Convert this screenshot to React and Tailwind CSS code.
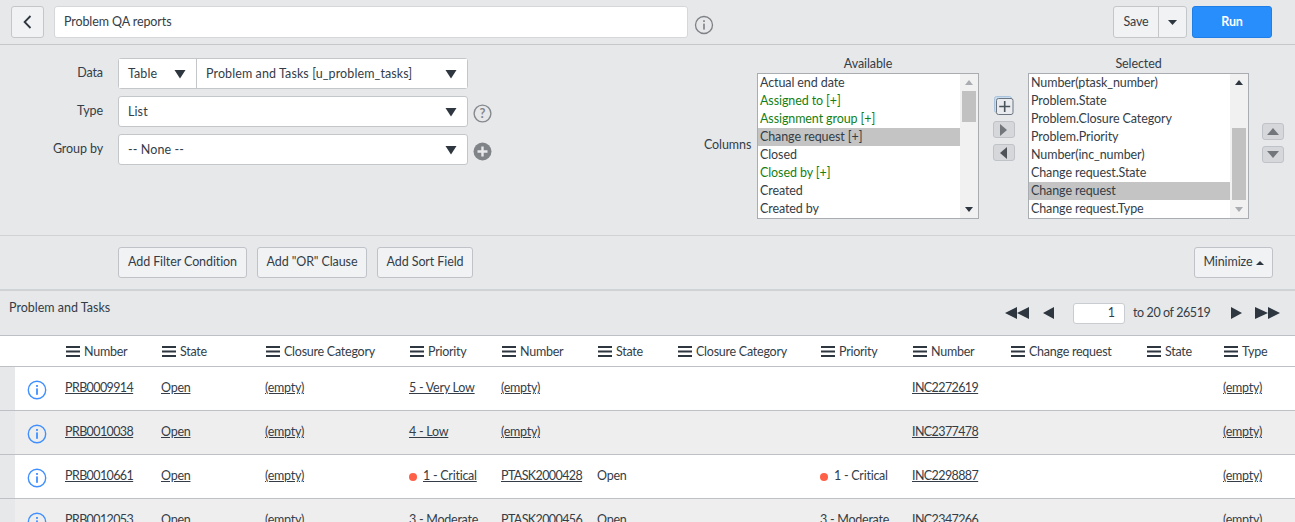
import React from "react";

const cols = "grid grid-cols-[15px_50px_96px_104px_144px_92px_96px_80px_143px_92px_98px_136px_77px_72px]";

const headers = ["Number", "State", "Closure Category", "Priority", "Number", "State", "Closure Category", "Priority", "Number", "Change request", "State", "Type"];

const rows = [
  ["#PRB0009914", "Open", "(empty)", "5 - Very Low", "(empty)", "", "", "", "#INC2272619", "", "", "(empty)"],
  ["#PRB0010038", "Open", "(empty)", "4 - Low", "(empty)", "", "", "", "#INC2377478", "", "", "(empty)"],
  ["#PRB0010661", "Open", "(empty)", "!1 - Critical", "#PTASK2000428", "=Open", "", "~1 - Critical", "#INC2298887", "", "", "(empty)"],
  ["#PRB0012053", "Open", "(empty)", "3 - Moderate", "#PTASK2000456", "=Open", "", "=3 - Moderate", "#INC2347266", "", "", "(empty)"],
];

const available = [
  ["Actual end date"],
  ["Assigned to [+]", "green"],
  ["Assignment group [+]", "green"],
  ["Change request [+]", "sel"],
  ["Closed"],
  ["Closed by [+]", "green"],
  ["Created"],
  ["Created by"],
];

const selected = [
  ["Number(ptask_number)"],
  ["Problem.State"],
  ["Problem.Closure Category"],
  ["Problem.Priority"],
  ["Number(inc_number)"],
  ["Change request.State"],
  ["Change request", "sel"],
  ["Change request.Type"],
];

const Caret = ({ className = "" }) => (
  <svg width="12" height="10" viewBox="0 0 12 10" className={className}>
    <path d="M0.5 1h11L6 9.5z" fill="#2e3640" />
  </svg>
);

const Tri = ({ dir, color = "#2e3640", w = 11, h = 12 }) => (
  <svg width={w} height={h} viewBox="0 0 10 10" preserveAspectRatio="none" className="block">
    <path d={dir === "left" ? "M10 0v10L0 5z" : "M0 0v10l10-5z"} fill={color} />
  </svg>
);

const Lines = () => (
  <svg width="14" height="11" viewBox="0 0 14 11" className="shrink-0">
    <path d="M0 0h14v2H0zM0 4.5h14v2H0zM0 9h14v2H0z" fill="#2e3640" />
  </svg>
);

const InfoIcon = () => (
  <svg width="20" height="20" viewBox="0 0 20 20" className="mt-[3px]">
    <circle cx="10" cy="10" r="8.7" fill="none" stroke="#3f8fff" strokeWidth="1.4" />
    <rect x="9.1" y="8.4" width="1.8" height="6.4" fill="#3f8fff" />
    <rect x="9.1" y="5" width="1.8" height="1.9" fill="#3f8fff" />
  </svg>
);

const Select = ({ children, className = "" }) => (
  <div className={`flex items-center justify-between h-[31px] pl-[9px] pr-[10px] bg-white ${className}`}>
    <span className="pt-[2px] tracking-[0.1px]">{children}</span>
    <Caret />
  </div>
);

const Button = ({ children, className = "" }) => (
  <button className={`h-[31px] bg-[#f1f2f4] border border-[#bfc3c7] rounded-[3px] text-[#343d47] ${className}`}>
    {children}
  </button>
);

const SmallButton = ({ children }) => (
  <div className="flex items-center justify-center w-[22px] h-[17px] bg-[#d5d7da] border border-[#bfc3c7] rounded-[3px]">
    {children}
  </div>
);

const ListBox = ({ items, thumbTop, thumbHeight, upColor, downColor }) => (
  <div className="flex h-[146px] bg-white border border-[#a9adb1]">
    <div className="flex-1 min-w-0">
      {items.map(([text, kind]) => (
        <div
          key={text}
          className={`h-[18px] pl-[2px] leading-[17px] ${kind === "sel" ? "bg-[#c4c4c4]" : ""} ${kind === "green" ? "text-[#157f15]" : ""}`}
        >
          {text}
        </div>
      ))}
    </div>
    <div className="flex flex-col w-[18px] bg-[#f1f1f1]">
      <div className="flex items-center justify-center h-[17px] shrink-0">
        <svg width="8" height="5" viewBox="0 0 8 5"><path d="M0 5h8L4 0z" fill={upColor} /></svg>
      </div>
      <div className="flex-1 px-[2px]">
        <div className={`w-full bg-[#c1c1c1] ${thumbTop} ${thumbHeight}`} />
      </div>
      <div className="flex items-center justify-center h-[17px] shrink-0">
        <svg width="8" height="5" viewBox="0 0 8 5"><path d="M0 0h8L4 5z" fill={downColor} /></svg>
      </div>
    </div>
  </div>
);

const Dot = () => <span className="w-[8px] h-[8px] rounded-full bg-[#ff6048]" />;

const Cell = ({ value }) => {
  if (!value) return <div />;
  const first = value[0];
  const cell = "flex items-center tracking-[-0.25px]";
  if (first === "=") return <div className={cell}>{value.slice(1)}</div>;
  if (first === "~")
    return (
      <div className={`${cell} gap-[6px]`}>
        <Dot />
        {value.slice(1)}
      </div>
    );
  if (first === "!")
    return (
      <div className={`${cell} gap-[6px]`}>
        <Dot />
        <span className="underline">{value.slice(1)}</span>
      </div>
    );
  if (first === "#")
    return (
      <div className={cell}>
        <span className="underline tracking-[-0.6px]">{value.slice(1)}</span>
      </div>
    );
  return (
    <div className={cell}>
      <span className="underline">{value}</span>
    </div>
  );
};

export default function App() {
  return (
    <div className="h-[522px] overflow-hidden bg-[#e6e8ea] text-[#343d47] text-[12.5px] tracking-[-0.1px] font-['Lato','Noto_Sans',sans-serif]">
      {/* top bar */}
      <div className="flex items-center h-[45px] pl-[11px] pr-[23px] border-b border-[#c5c8cb]">
        <button className="flex items-center justify-center w-[33px] h-[32px] bg-[#f1f2f4] border border-[#c4c7ca] rounded-[3px]">
          <svg width="9" height="14" viewBox="0 0 9 14">
            <path d="M7.5 1L1.6 7l5.9 6" fill="none" stroke="#2e3640" strokeWidth="1.8" />
          </svg>
        </button>
        <div className="flex items-center w-[634px] h-[32px] ml-[10px] pl-[9px] bg-white border border-[#d5d7da] rounded-[3px]">
          Problem QA reports
        </div>
        <svg width="20" height="20" viewBox="0 0 20 20" className="ml-[6px] mt-[6px]">
          <circle cx="10" cy="10" r="8.5" fill="none" stroke="#7d8185" strokeWidth="1.3" />
          <rect x="9.2" y="8.6" width="1.6" height="6" fill="#7d8185" />
          <rect x="9.2" y="5.2" width="1.6" height="1.8" fill="#7d8185" />
        </svg>
        <div className="flex w-[74px] h-[32px] ml-auto bg-[#f1f2f4] border border-[#c4c7ca] rounded-[3px]">
          <div className="flex items-center justify-center w-[45px] border-r border-[#c4c7ca]">Save</div>
          <div className="flex items-center justify-center flex-1">
            <svg width="9" height="5" viewBox="0 0 9 5"><path d="M0 0h9L4.5 5z" fill="#2e3640" /></svg>
          </div>
        </div>
        <button className="w-[80px] h-[32px] ml-[5px] bg-[#278efc] border border-[#1f7fe6] rounded-[3px] text-white font-bold">
          Run
        </button>
      </div>

      {/* report settings */}
      <div className="flex h-[191px] border-b border-[#d0d3d6]">
        <div className="flex flex-col gap-[7px] w-[690px] pt-[13px]">
          <div className="flex items-center">
            <span className="w-[103px] text-right mr-[15px]">Data</span>
            <div className="flex w-[350px] h-[31px] bg-white border border-[#c4c7ca] rounded-[3px]">
              <Select className="w-[78px] border-r border-[#c4c7ca] h-full">Table</Select>
              <Select className="flex-1 h-full">Problem and Tasks [u_problem_tasks]</Select>
            </div>
          </div>
          <div className="flex items-center">
            <span className="w-[103px] text-right mr-[15px]">Type</span>
            <Select className="w-[350px] border border-[#c4c7ca] rounded-[3px]">List</Select>
            <svg width="19" height="19" viewBox="0 0 19 19" className="ml-[5px] mt-[4px]">
              <circle cx="9.5" cy="9.5" r="8.4" fill="none" stroke="#85898d" strokeWidth="1.4" />
              <text x="9.5" y="14" textAnchor="middle" fontSize="13" fontWeight="700" fill="#85898d">?</text>
            </svg>
          </div>
          <div className="flex items-center">
            <span className="w-[103px] text-right mr-[15px]">Group by</span>
            <Select className="w-[350px] border border-[#c4c7ca] rounded-[3px]">-- None --</Select>
            <svg width="19" height="19" viewBox="0 0 19 19" className="ml-[5px] mt-[4px]">
              <circle cx="9.5" cy="9.5" r="9" fill="#808488" />
              <path d="M8.3 4.5h2.4v3.8h3.8v2.4h-3.8v3.8H8.3v-3.8H4.5V8.3h3.8z" fill="#e6e8ea" />
            </svg>
          </div>
        </div>

        <div className="flex items-start pt-[10px]">
          <div className="w-[63px] pt-[81px] pl-[14px]">Columns</div>
          <div className="w-[222px] ml-[4px]">
            <div className="text-center h-[18px] leading-[17px]">Available</div>
            <ListBox items={available} thumbTop="mt-0" thumbHeight="h-[31px]" upColor="#a9adb1" downColor="#2e3640" />
          </div>
          <div className="flex flex-col items-center gap-[6px] w-[49px] pt-[41px]">
            <svg width="22" height="19" viewBox="0 0 22 19">
              <rect x="1.5" y="0.5" width="17" height="16" rx="2" fill="#c9dcef" stroke="#a9c3dc" />
              <rect x="3.5" y="2.5" width="16.5" height="16" rx="2" fill="#e9ebee" stroke="#6b7580" />
              <path d="M11.7 5v11M6.2 10.5h11" stroke="#4a535c" strokeWidth="1.6" />
            </svg>
            <SmallButton><Tri dir="right" color="#73777c" w={7} h={12} /></SmallButton>
            <SmallButton><Tri dir="left" color="#4f5358" w={7} h={12} /></SmallButton>
          </div>
          <div className="w-[221px]">
            <div className="text-center h-[18px] leading-[17px]">Selected</div>
            <ListBox items={selected} thumbTop="mt-[37px]" thumbHeight="h-[72px]" upColor="#2e3640" downColor="#a9adb1" />
          </div>
          <div className="flex flex-col gap-[6px] ml-[13px] pt-[68px]">
            <SmallButton>
              <svg width="12" height="7" viewBox="0 0 12 7"><path d="M0 7h12L6 0z" fill="#73777c" /></svg>
            </SmallButton>
            <SmallButton>
              <svg width="12" height="7" viewBox="0 0 12 7"><path d="M0 0h12L6 7z" fill="#73777c" /></svg>
            </SmallButton>
          </div>
        </div>
      </div>

      {/* filter buttons */}
      <div className="flex items-center gap-[10px] h-[55px] pl-[118px] pr-[22px] border-b-2 border-[#d0d3d6]">
        <Button className="w-[129px]">Add Filter Condition</Button>
        <Button className="w-[110px]">Add "OR" Clause</Button>
        <Button className="w-[96px]">Add Sort Field</Button>
        <Button className="flex items-center justify-center gap-[3px] w-[79px] ml-auto">
          Minimize
          <svg width="8" height="4" viewBox="0 0 8 4"><path d="M0 4h8L4 0z" fill="#2e3640" /></svg>
        </Button>
      </div>

      {/* list title and pager */}
      <div className="flex h-[45px] pl-[9px] pr-[15px] border-b border-[#bdc0c4]">
        <div className="pt-[8px] tracking-normal">Problem and Tasks</div>
        <div className="flex items-center h-[44px] ml-auto">
          <Tri dir="left" w={12} h={12} />
          <Tri dir="left" w={12} h={12} />
          <span className="ml-[14px]"><Tri dir="left" /></span>
          <div className="flex items-center justify-end w-[52px] h-[21px] ml-[19px] pr-[9px] bg-white border border-[#c9ccd0] rounded-[3px]">1</div>
          <span className="w-[78px] ml-[8px] whitespace-nowrap tracking-[-0.4px]">to 20 of 26519</span>
          <span className="ml-[20px]"><Tri dir="right" /></span>
          <span className="flex ml-[13px]">
            <Tri dir="right" w={13} h={12} />
            <Tri dir="right" w={12} h={12} />
          </span>
        </div>
      </div>

      {/* table */}
      <div className={`${cols} h-[31px] bg-white border-b border-[#bdc0c4]`}>
        <div className="col-span-2" />
        {headers.map((h, i) => (
          <div key={i} className="flex items-center gap-[4px] pl-px tracking-[-0.25px]">
            <Lines />
            <span className="pt-[2px]">{h}</span>
          </div>
        ))}
      </div>
      {rows.map((row, r) => (
        <div key={r} className={`${cols} h-[44px] border-b border-[#bdc0c4] ${r % 2 ? "bg-[#eeeeee]" : "bg-white"}`}>
          <div className="bg-[#e6e8ea]" />
          <div className="flex items-center pl-[12px]">
            <InfoIcon />
          </div>
          {row.map((value, i) => (
            <Cell key={i} value={value} />
          ))}
        </div>
      ))}
    </div>
  );
}
